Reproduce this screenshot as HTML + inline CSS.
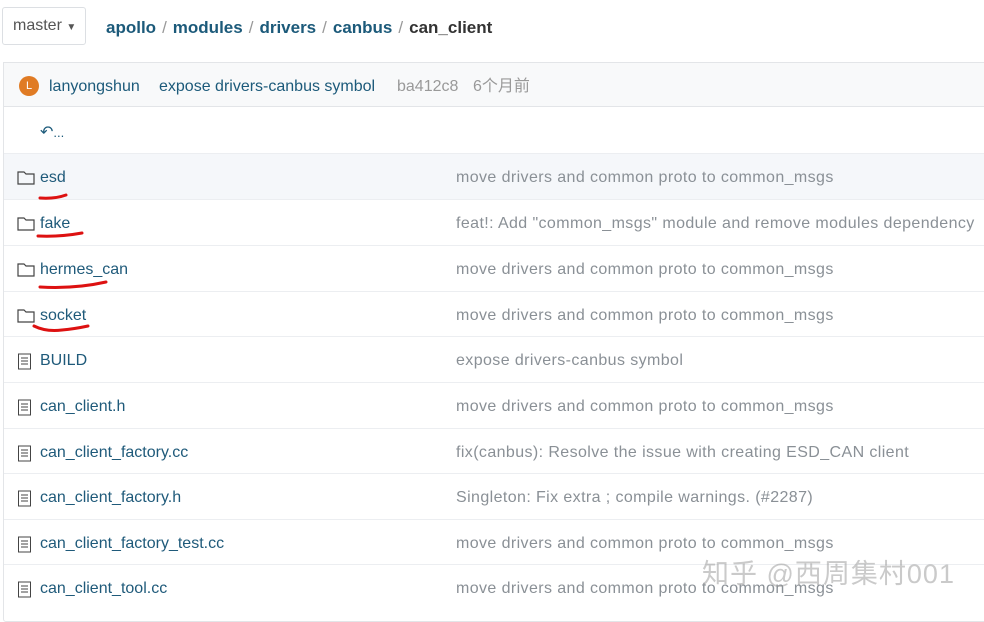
<!DOCTYPE html>
<html><head><meta charset="utf-8"><style>
*{margin:0;padding:0;box-sizing:border-box}
body{width:984px;height:612px;overflow:hidden;background:#fff;font-family:"Liberation Sans","Noto Sans CJK SC",sans-serif;position:relative}
.btn{position:absolute;left:2px;top:7px;width:84px;height:38px;border:1px solid #dcdfe3;border-radius:3px;color:#555;font-size:16px;line-height:36px;padding-left:10px}
.crumb{position:absolute;left:106px;top:18px;font-size:17px;font-weight:bold;color:#1c5a7a}
.crumb span{color:#999;font-weight:normal;margin:0 6px}
.crumb b{color:#333}
.box{position:absolute;left:3px;top:62px;width:990px;height:560px;border:1px solid #e3e5e8;border-radius:3px}
.hdr{position:absolute;left:3px;top:62px;width:990px;height:45px;background:#f8f9fa;border:1px solid #e3e5e8;font-size:16px;line-height:47px;color:#1c5a7a}
.row{position:absolute;left:4px;width:990px;height:46px;border-top:1px solid #eceef1;font-size:16px;line-height:48px}
.row .n{position:absolute;left:36px;color:#1f5a7a}
.row .m{position:absolute;left:452px;color:#8a9096;white-space:nowrap;letter-spacing:0.4px}
.ic{position:absolute;left:13px;top:16px}
</style></head><body>
<div class="btn">master <span style="font-size:10px">▼</span></div>
<div class="crumb">apollo<span>/</span>modules<span>/</span>drivers<span>/</span>canbus<span>/</span><b>can_client</b></div>
<div class="box"></div>
<div class="hdr"><span style="position:absolute;left:15px;top:13px;width:20px;height:20px;border-radius:50%;background:#e07b24;color:#fff;font-size:11px;line-height:20px;text-align:center">L</span><span style="position:absolute;left:45px">lanyongshun</span><span style="position:absolute;left:155px">expose drivers-canbus symbol</span><span style="position:absolute;left:393px;color:#999">ba412c8</span><span style="position:absolute;left:469px;color:#999">6个月前</span></div>
<div class="row" style="top:107px;border-top:none"><span style="position:absolute;left:36px;top:2px;color:#1c5a7a;font-size:16px">&#8630;<span style="font-size:13px">...</span></span></div>
<div class="row" style="top:153px;background:#f5f7fa"><svg class="ic" width="18" height="16"><path d="M1 2h6l2 2h8v10H1z" fill="none" stroke="#444" stroke-width="1.2"/></svg><span class="n">esd</span><span class="m">move drivers and common proto to common_msgs</span></div>
<div class="row" style="top:199px"><svg class="ic" width="18" height="16"><path d="M1 2h6l2 2h8v10H1z" fill="none" stroke="#444" stroke-width="1.2"/></svg><span class="n">fake</span><span class="m">feat!: Add "common_msgs" module and remove modules dependency</span></div>
<div class="row" style="top:245px"><svg class="ic" width="18" height="16"><path d="M1 2h6l2 2h8v10H1z" fill="none" stroke="#444" stroke-width="1.2"/></svg><span class="n">hermes_can</span><span class="m">move drivers and common proto to common_msgs</span></div>
<div class="row" style="top:291px"><svg class="ic" width="18" height="16"><path d="M1 2h6l2 2h8v10H1z" fill="none" stroke="#444" stroke-width="1.2"/></svg><span class="n">socket</span><span class="m">move drivers and common proto to common_msgs</span></div>
<div class="row" style="top:336px"><svg class="ic" width="16" height="17"><rect x="1.5" y="1" width="12" height="15" fill="none" stroke="#444"/><path d="M4 5h7M4 8h7M4 11h7" stroke="#444"/></svg><span class="n">BUILD</span><span class="m">expose drivers-canbus symbol</span></div>
<div class="row" style="top:382px"><svg class="ic" width="16" height="17"><rect x="1.5" y="1" width="12" height="15" fill="none" stroke="#444"/><path d="M4 5h7M4 8h7M4 11h7" stroke="#444"/></svg><span class="n">can_client.h</span><span class="m">move drivers and common proto to common_msgs</span></div>
<div class="row" style="top:428px"><svg class="ic" width="16" height="17"><rect x="1.5" y="1" width="12" height="15" fill="none" stroke="#444"/><path d="M4 5h7M4 8h7M4 11h7" stroke="#444"/></svg><span class="n">can_client_factory.cc</span><span class="m">fix(canbus): Resolve the issue with creating ESD_CAN client</span></div>
<div class="row" style="top:473px"><svg class="ic" width="16" height="17"><rect x="1.5" y="1" width="12" height="15" fill="none" stroke="#444"/><path d="M4 5h7M4 8h7M4 11h7" stroke="#444"/></svg><span class="n">can_client_factory.h</span><span class="m">Singleton: Fix extra ; compile warnings. (#2287)</span></div>
<div class="row" style="top:519px"><svg class="ic" width="16" height="17"><rect x="1.5" y="1" width="12" height="15" fill="none" stroke="#444"/><path d="M4 5h7M4 8h7M4 11h7" stroke="#444"/></svg><span class="n">can_client_factory_test.cc</span><span class="m">move drivers and common proto to common_msgs</span></div>
<div class="row" style="top:564px"><svg class="ic" width="16" height="17"><rect x="1.5" y="1" width="12" height="15" fill="none" stroke="#444"/><path d="M4 5h7M4 8h7M4 11h7" stroke="#444"/></svg><span class="n">can_client_tool.cc</span><span class="m">move drivers and common proto to common_msgs</span></div>
<div style="position:absolute;left:702px;top:552px;font-size:27px;color:rgba(150,150,150,0.5);white-space:nowrap;letter-spacing:1px">知乎 @西周集村001</div>
<svg style="position:absolute;left:0;top:0" width="984" height="612"><g fill="none" stroke="#d11" stroke-width="3" stroke-linecap="round"><path d="M40 198q15 1 26-3"/><path d="M38 236q22 1 44-3"/><path d="M40 287q35 2 66-5"/><path d="M34 326q12 6 28 4q12-1 26-4"/></g></svg>
</body></html>
